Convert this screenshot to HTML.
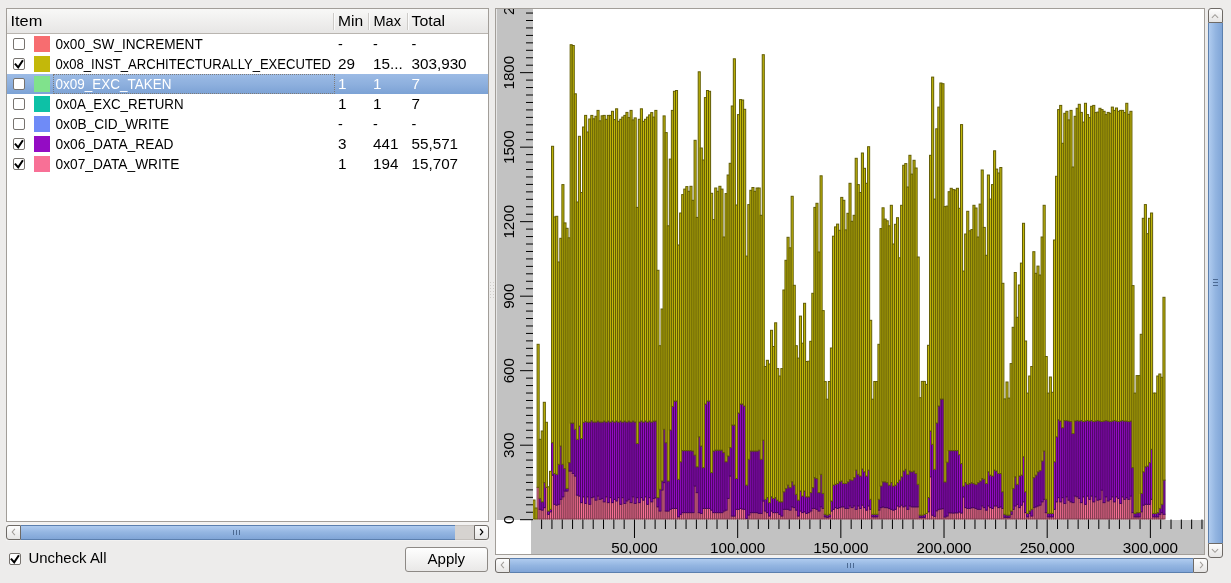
<!DOCTYPE html>
<html><head><meta charset="utf-8"><style>
html,body{margin:0;padding:0;}
body{width:1231px;height:583px;background:#edeceb;position:relative;overflow:hidden;font-family:"Liberation Sans",sans-serif;font-size:13.5px;color:#000;}
div,span,svg{position:absolute;box-sizing:border-box;}
.tree{left:6px;top:8px;width:483px;height:514px;border:1px solid #a29e99;background:#fff;}
.hdr{left:7px;top:9px;width:481px;height:25px;background:linear-gradient(#f8f8f7,#e7e6e5);border-bottom:1px solid #b9b5b0;}
.sep{top:13px;width:2px;height:17px;border-left:1px solid #cdcbc8;border-right:1px solid #fbfbfb;}
.ht{top:9px;height:24px;line-height:24px;white-space:nowrap;}
.sel{left:7px;width:481px;height:20px;background:linear-gradient(#9cbbe5,#8eb0de 50%,#7ca2d5);}
.focus{left:53px;width:282px;height:20px;border:1px dotted #7d7a78;}
.cb{left:13px;width:12px;height:12px;border:1px solid #77736f;border-radius:2px;background:#fff;}
.sw{left:34px;width:16px;height:16px;}
.t{height:20px;line-height:20px;white-space:nowrap;padding-top:1px;}
.t.w{color:#fff;}
.chart{left:0;top:0;will-change:transform;}
.sb{border:1px solid #6e6a66;background:linear-gradient(#fdfdfd,#e6e5e4);}
.hh{background:linear-gradient(#afcbef,#93b5e1 50%,#80a5d7);border-top:1px solid #5b7fae;border-bottom:1px solid #5b7fae;}
.vh{background:linear-gradient(90deg,#afcbef,#93b5e1 50%,#80a5d7);border-left:1px solid #5b7fae;border-right:1px solid #5b7fae;}
.grip{background:#4c6a93;}
.btn{left:405px;top:547px;width:83px;height:25px;border:1px solid #8d8985;border-radius:3px;background:linear-gradient(#fefefe,#e9e8e7);}
.arr{width:8px;height:8px;}
</style></head><body>
<div class="tree"></div>
<div class="hdr"></div>
<div class="sep" style="left:333px"></div><div class="sep" style="left:368px"></div><div class="sep" style="left:407px"></div>

<div class="cb" style="top:38px"></div><div class="sw" style="top:36px;background:#f76d70"></div><div class="cb" style="top:58px"></div><svg class="ck" style="left:13px;top:58px" width="12" height="12" viewBox="0 0 12 12"><path d="M1.9 5.6 L5.2 9.4 L9.9 2.2" fill="none" stroke="#000" stroke-width="2" stroke-linejoin="miter"/></svg><div class="sw" style="top:56px;background:#c3b80a"></div><div class="sel" style="top:74px"></div><div class="focus" style="top:74px"></div><div class="cb" style="top:78px"></div><div class="sw" style="top:76px;background:#80e28c"></div><div class="cb" style="top:98px"></div><div class="sw" style="top:96px;background:#0dc1a6"></div><div class="cb" style="top:118px"></div><div class="sw" style="top:116px;background:#6f8bf7"></div><div class="cb" style="top:138px"></div><svg class="ck" style="left:13px;top:138px" width="12" height="12" viewBox="0 0 12 12"><path d="M1.9 5.6 L5.2 9.4 L9.9 2.2" fill="none" stroke="#000" stroke-width="2" stroke-linejoin="miter"/></svg><div class="sw" style="top:136px;background:#940cc4"></div><div class="cb" style="top:158px"></div><svg class="ck" style="left:13px;top:158px" width="12" height="12" viewBox="0 0 12 12"><path d="M1.9 5.6 L5.2 9.4 L9.9 2.2" fill="none" stroke="#000" stroke-width="2" stroke-linejoin="miter"/></svg><div class="sw" style="top:156px;background:#f87096"></div>
<!-- left h scrollbar -->
<div style="left:6px;top:522px;width:483px;height:19px;background:#f3f2f1"></div>
<div class="sb" style="left:6px;top:525px;width:15px;height:15px;border-radius:3px 0 0 3px;"></div>
<svg class="arr" style="left:10px;top:528px" width="8" height="9" viewBox="0 0 8 9"><path d="M5 1 L2 4.5 L5 8" fill="none" stroke="#a19d99" stroke-width="1.2"/></svg>
<div class="hh" style="left:21px;top:525px;width:434px;height:15px;"></div>
<div class="grip" style="left:233px;top:530px;width:1px;height:5px"></div><div class="grip" style="left:236px;top:530px;width:1px;height:5px"></div><div class="grip" style="left:239px;top:530px;width:1px;height:5px"></div>
<div style="left:455px;top:525px;width:19px;height:15px;background:#d6d3d0;border-top:1px solid #c4c0bc;border-bottom:1px solid #c4c0bc"></div>
<div class="sb" style="left:474px;top:525px;width:15px;height:15px;border-radius:0 3px 3px 0;"></div>
<svg class="arr" style="left:477px;top:528px" width="8" height="9" viewBox="0 0 8 9"><path d="M3 1 L6 4.5 L3 8" fill="none" stroke="#000" stroke-width="1.4"/></svg>
<!-- uncheck all -->
<div class="cb" style="left:9px;top:553px"></div>
<svg class="ck" style="left:9px;top:553px" width="12" height="12" viewBox="0 0 12 12"><path d="M1.9 5.6 L5.2 9.4 L9.9 2.2" fill="none" stroke="#000" stroke-width="2" stroke-linejoin="miter"/></svg>

<div class="btn"></div>

<!-- splitter dots -->
<svg style="left:489px;top:281px" width="6" height="18" viewBox="0 0 6 18"><g fill="#cfcdca">
<rect x="1" y="1" width="1" height="1"/><rect x="4" y="1" width="1" height="1"/><rect x="1" y="4" width="1" height="1"/><rect x="4" y="4" width="1" height="1"/>
<rect x="1" y="7" width="1" height="1"/><rect x="4" y="7" width="1" height="1"/><rect x="1" y="10" width="1" height="1"/><rect x="4" y="10" width="1" height="1"/>
<rect x="1" y="13" width="1" height="1"/><rect x="4" y="13" width="1" height="1"/><rect x="1" y="16" width="1" height="1"/><rect x="4" y="16" width="1" height="1"/></g></svg>
<svg class="chart" width="1231" height="583" viewBox="0 0 1231 583">
<defs><clipPath id="pc"><rect x="533" y="9" width="671" height="511"/></clipPath>
<clipPath id="fc"><rect x="496" y="9" width="708" height="545"/></clipPath></defs>
<rect x="495.5" y="8.5" width="709" height="546" fill="#fff" stroke="#a29e99"/>
<g clip-path="url(#pc)">
<g fill="#f87096" stroke="#7c384b" stroke-width="1"><rect x="537.10" y="487.3" width="2.066" height="31.7"/><rect x="539.16" y="509.3" width="2.066" height="9.7"/><rect x="541.23" y="510.1" width="2.066" height="8.9"/><rect x="543.29" y="507.6" width="2.066" height="11.4"/><rect x="545.36" y="487.3" width="2.066" height="31.7"/><rect x="547.42" y="514.3" width="2.066" height="4.7"/><rect x="549.49" y="511.8" width="2.066" height="7.2"/><rect x="551.55" y="475.1" width="2.066" height="43.9"/><rect x="553.62" y="504.3" width="2.066" height="14.7"/><rect x="555.69" y="505.1" width="2.066" height="13.9"/><rect x="557.75" y="504.3" width="2.066" height="14.7"/><rect x="559.82" y="499.3" width="2.066" height="19.7"/><rect x="561.88" y="496.8" width="2.066" height="22.2"/><rect x="563.95" y="491.0" width="2.066" height="28.0"/><rect x="566.01" y="491.0" width="2.066" height="28.0"/><rect x="568.08" y="471.0" width="2.066" height="48.0"/><rect x="570.14" y="471.0" width="2.066" height="48.0"/><rect x="572.21" y="473.5" width="2.066" height="45.5"/><rect x="574.28" y="476.0" width="2.066" height="43.0"/><rect x="576.34" y="495.1" width="2.066" height="23.9"/><rect x="578.41" y="496.0" width="2.066" height="23.0"/><rect x="580.47" y="502.6" width="2.066" height="16.4"/><rect x="582.54" y="496.8" width="2.066" height="22.2"/><rect x="584.60" y="503.4" width="2.066" height="15.6"/><rect x="586.67" y="496.8" width="2.066" height="22.2"/><rect x="588.73" y="504.3" width="2.066" height="14.7"/><rect x="590.80" y="497.6" width="2.066" height="21.4"/><rect x="592.87" y="496.8" width="2.066" height="22.2"/><rect x="594.93" y="500.1" width="2.066" height="18.9"/><rect x="597.00" y="496.0" width="2.066" height="23.0"/><rect x="599.06" y="499.3" width="2.066" height="19.7"/><rect x="601.13" y="498.4" width="2.066" height="20.6"/><rect x="603.19" y="501.8" width="2.066" height="17.2"/><rect x="605.26" y="496.8" width="2.066" height="22.2"/><rect x="607.32" y="502.6" width="2.066" height="16.4"/><rect x="609.39" y="497.6" width="2.066" height="21.4"/><rect x="611.45" y="502.6" width="2.066" height="16.4"/><rect x="613.52" y="499.3" width="2.066" height="19.7"/><rect x="615.59" y="500.9" width="2.066" height="18.1"/><rect x="617.65" y="497.6" width="2.066" height="21.4"/><rect x="619.72" y="504.3" width="2.066" height="14.7"/><rect x="621.78" y="497.6" width="2.066" height="21.4"/><rect x="623.85" y="503.4" width="2.066" height="15.6"/><rect x="625.91" y="500.9" width="2.066" height="18.1"/><rect x="627.98" y="499.3" width="2.066" height="19.7"/><rect x="630.04" y="502.6" width="2.066" height="16.4"/><rect x="632.11" y="496.8" width="2.066" height="22.2"/><rect x="634.17" y="503.4" width="2.066" height="15.6"/><rect x="636.24" y="497.6" width="2.066" height="21.4"/><rect x="638.31" y="502.6" width="2.066" height="16.4"/><rect x="640.37" y="497.6" width="2.066" height="21.4"/><rect x="642.44" y="500.1" width="2.066" height="18.9"/><rect x="644.50" y="496.8" width="2.066" height="22.2"/><rect x="646.57" y="504.3" width="2.066" height="14.7"/><rect x="648.63" y="497.6" width="2.066" height="21.4"/><rect x="650.70" y="501.8" width="2.066" height="17.2"/><rect x="652.76" y="498.4" width="2.066" height="20.6"/><rect x="654.83" y="497.6" width="2.066" height="21.4"/><rect x="656.90" y="506.8" width="2.066" height="12.2"/><rect x="658.96" y="511.0" width="2.066" height="8.0"/><rect x="661.03" y="490.0" width="2.066" height="29.0"/><rect x="663.09" y="482.6" width="2.066" height="36.4"/><rect x="665.16" y="511.0" width="2.066" height="8.0"/><rect x="667.22" y="511.0" width="2.066" height="8.0"/><rect x="669.29" y="509.3" width="2.066" height="9.7"/><rect x="671.35" y="508.4" width="2.066" height="10.6"/><rect x="673.42" y="508.4" width="2.066" height="10.6"/><rect x="675.49" y="508.4" width="2.066" height="10.6"/><rect x="677.55" y="516.8" width="2.066" height="2.2"/><rect x="679.62" y="514.3" width="2.066" height="4.7"/><rect x="681.68" y="512.6" width="2.066" height="6.4"/><rect x="683.75" y="512.6" width="2.066" height="6.4"/><rect x="685.81" y="512.6" width="2.066" height="6.4"/><rect x="687.88" y="512.6" width="2.066" height="6.4"/><rect x="689.94" y="512.6" width="2.066" height="6.4"/><rect x="692.01" y="512.6" width="2.066" height="6.4"/><rect x="694.07" y="486.0" width="2.066" height="33.0"/><rect x="696.14" y="492.6" width="2.066" height="26.4"/><rect x="698.21" y="512.6" width="2.066" height="6.4"/><rect x="700.27" y="513.4" width="2.066" height="5.6"/><rect x="702.34" y="508.4" width="2.066" height="10.6"/><rect x="704.40" y="508.4" width="2.066" height="10.6"/><rect x="706.47" y="508.4" width="2.066" height="10.6"/><rect x="708.53" y="508.4" width="2.066" height="10.6"/><rect x="710.60" y="510.1" width="2.066" height="8.9"/><rect x="712.66" y="512.6" width="2.066" height="6.4"/><rect x="714.73" y="512.6" width="2.066" height="6.4"/><rect x="716.79" y="512.6" width="2.066" height="6.4"/><rect x="718.86" y="512.6" width="2.066" height="6.4"/><rect x="720.93" y="512.6" width="2.066" height="6.4"/><rect x="722.99" y="511.0" width="2.066" height="8.0"/><rect x="725.06" y="510.1" width="2.066" height="8.9"/><rect x="727.12" y="498.4" width="2.066" height="20.6"/><rect x="729.19" y="476.0" width="2.066" height="43.0"/><rect x="731.25" y="516.0" width="2.066" height="3.0"/><rect x="733.32" y="516.0" width="2.066" height="3.0"/><rect x="735.38" y="509.3" width="2.066" height="9.7"/><rect x="737.45" y="509.3" width="2.066" height="9.7"/><rect x="739.52" y="508.4" width="2.066" height="10.6"/><rect x="741.58" y="509.0" width="2.066" height="10.0"/><rect x="743.65" y="509.3" width="2.066" height="9.7"/><rect x="745.71" y="518.4" width="2.066" height="0.6"/><rect x="747.78" y="515.0" width="2.066" height="4.0"/><rect x="749.84" y="512.6" width="2.066" height="6.4"/><rect x="751.91" y="512.6" width="2.066" height="6.4"/><rect x="753.97" y="512.6" width="2.066" height="6.4"/><rect x="756.04" y="512.6" width="2.066" height="6.4"/><rect x="758.11" y="513.4" width="2.066" height="5.6"/><rect x="760.17" y="513.4" width="2.066" height="5.6"/><rect x="762.24" y="501.0" width="2.066" height="18.0"/><rect x="764.30" y="511.0" width="2.066" height="8.0"/><rect x="766.37" y="512.6" width="2.066" height="6.4"/><rect x="768.43" y="516.0" width="2.066" height="3.0"/><rect x="770.50" y="511.0" width="2.066" height="8.0"/><rect x="772.56" y="512.6" width="2.066" height="6.4"/><rect x="774.63" y="512.6" width="2.066" height="6.4"/><rect x="776.69" y="512.6" width="2.066" height="6.4"/><rect x="778.76" y="514.3" width="2.066" height="4.7"/><rect x="780.83" y="516.0" width="2.066" height="3.0"/><rect x="782.89" y="509.3" width="2.066" height="9.7"/><rect x="784.96" y="509.3" width="2.066" height="9.7"/><rect x="787.02" y="509.3" width="2.066" height="9.7"/><rect x="789.09" y="510.1" width="2.066" height="8.9"/><rect x="791.15" y="506.8" width="2.066" height="12.2"/><rect x="793.22" y="507.6" width="2.066" height="11.4"/><rect x="795.28" y="510.1" width="2.066" height="8.9"/><rect x="797.35" y="516.0" width="2.066" height="3.0"/><rect x="799.41" y="511.0" width="2.066" height="8.0"/><rect x="801.48" y="512.6" width="2.066" height="6.4"/><rect x="803.55" y="511.8" width="2.066" height="7.2"/><rect x="805.61" y="513.4" width="2.066" height="5.6"/><rect x="807.68" y="512.6" width="2.066" height="6.4"/><rect x="809.74" y="511.0" width="2.066" height="8.0"/><rect x="811.81" y="508.4" width="2.066" height="10.6"/><rect x="813.87" y="508.4" width="2.066" height="10.6"/><rect x="815.94" y="509.3" width="2.066" height="9.7"/><rect x="818.00" y="511.0" width="2.066" height="8.0"/><rect x="820.07" y="506.8" width="2.066" height="12.2"/><rect x="822.14" y="508.4" width="2.066" height="10.6"/><rect x="824.20" y="516.8" width="2.066" height="2.2"/><rect x="826.27" y="517.3" width="2.066" height="1.7"/><rect x="828.33" y="516.8" width="2.066" height="2.2"/><rect x="830.40" y="511.0" width="2.066" height="8.0"/><rect x="832.46" y="509.3" width="2.066" height="9.7"/><rect x="834.53" y="507.6" width="2.066" height="11.4"/><rect x="836.59" y="508.4" width="2.066" height="10.6"/><rect x="838.66" y="507.6" width="2.066" height="11.4"/><rect x="840.73" y="506.8" width="2.066" height="12.2"/><rect x="842.79" y="506.8" width="2.066" height="12.2"/><rect x="844.86" y="508.4" width="2.066" height="10.6"/><rect x="846.92" y="508.4" width="2.066" height="10.6"/><rect x="848.99" y="505.9" width="2.066" height="13.1"/><rect x="851.05" y="507.6" width="2.066" height="11.4"/><rect x="853.12" y="505.9" width="2.066" height="13.1"/><rect x="855.18" y="509.3" width="2.066" height="9.7"/><rect x="857.25" y="505.9" width="2.066" height="13.1"/><rect x="859.31" y="508.4" width="2.066" height="10.6"/><rect x="861.38" y="505.1" width="2.066" height="13.9"/><rect x="863.45" y="507.6" width="2.066" height="11.4"/><rect x="865.51" y="510.1" width="2.066" height="8.9"/><rect x="867.58" y="505.9" width="2.066" height="13.1"/><rect x="869.64" y="509.3" width="2.066" height="9.7"/><rect x="871.71" y="516.8" width="2.066" height="2.2"/><rect x="873.77" y="516.8" width="2.066" height="2.2"/><rect x="875.84" y="516.8" width="2.066" height="2.2"/><rect x="877.90" y="510.1" width="2.066" height="8.9"/><rect x="879.97" y="507.6" width="2.066" height="11.4"/><rect x="882.03" y="506.8" width="2.066" height="12.2"/><rect x="884.10" y="507.6" width="2.066" height="11.4"/><rect x="886.17" y="507.6" width="2.066" height="11.4"/><rect x="888.23" y="508.4" width="2.066" height="10.6"/><rect x="890.30" y="509.3" width="2.066" height="9.7"/><rect x="892.36" y="510.1" width="2.066" height="8.9"/><rect x="894.43" y="509.3" width="2.066" height="9.7"/><rect x="896.49" y="505.9" width="2.066" height="13.1"/><rect x="898.56" y="506.8" width="2.066" height="12.2"/><rect x="900.62" y="505.1" width="2.066" height="13.9"/><rect x="902.69" y="506.8" width="2.066" height="12.2"/><rect x="904.76" y="505.9" width="2.066" height="13.1"/><rect x="906.82" y="509.3" width="2.066" height="9.7"/><rect x="908.89" y="505.9" width="2.066" height="13.1"/><rect x="910.95" y="506.8" width="2.066" height="12.2"/><rect x="913.02" y="506.8" width="2.066" height="12.2"/><rect x="915.08" y="506.8" width="2.066" height="12.2"/><rect x="917.15" y="506.8" width="2.066" height="12.2"/><rect x="919.21" y="517.3" width="2.066" height="1.7"/><rect x="921.28" y="517.3" width="2.066" height="1.7"/><rect x="923.35" y="517.3" width="2.066" height="1.7"/><rect x="925.41" y="513.4" width="2.066" height="5.6"/><rect x="927.48" y="511.8" width="2.066" height="7.2"/><rect x="929.54" y="476.8" width="2.066" height="42.2"/><rect x="931.61" y="515.2" width="2.066" height="3.8"/><rect x="933.67" y="516.3" width="2.066" height="2.7"/><rect x="935.74" y="510.8" width="2.066" height="8.2"/><rect x="937.80" y="509.3" width="2.066" height="9.7"/><rect x="939.87" y="509.0" width="2.066" height="10.0"/><rect x="941.93" y="508.6" width="2.066" height="10.4"/><rect x="944.00" y="517.0" width="2.066" height="2.0"/><rect x="946.07" y="516.0" width="2.066" height="3.0"/><rect x="948.13" y="512.8" width="2.066" height="6.2"/><rect x="950.20" y="512.8" width="2.066" height="6.2"/><rect x="952.26" y="513.0" width="2.066" height="6.0"/><rect x="954.33" y="512.8" width="2.066" height="6.2"/><rect x="956.39" y="512.8" width="2.066" height="6.2"/><rect x="958.46" y="512.0" width="2.066" height="7.0"/><rect x="960.52" y="513.0" width="2.066" height="6.0"/><rect x="962.59" y="496.9" width="2.066" height="22.1"/><rect x="964.65" y="507.6" width="2.066" height="11.4"/><rect x="966.72" y="508.4" width="2.066" height="10.6"/><rect x="968.79" y="508.4" width="2.066" height="10.6"/><rect x="970.85" y="507.6" width="2.066" height="11.4"/><rect x="972.92" y="507.6" width="2.066" height="11.4"/><rect x="974.98" y="508.4" width="2.066" height="10.6"/><rect x="977.05" y="509.3" width="2.066" height="9.7"/><rect x="979.11" y="509.3" width="2.066" height="9.7"/><rect x="981.18" y="505.9" width="2.066" height="13.1"/><rect x="983.24" y="507.6" width="2.066" height="11.4"/><rect x="985.31" y="510.1" width="2.066" height="8.9"/><rect x="987.38" y="505.9" width="2.066" height="13.1"/><rect x="989.44" y="507.6" width="2.066" height="11.4"/><rect x="991.51" y="508.4" width="2.066" height="10.6"/><rect x="993.57" y="505.9" width="2.066" height="13.1"/><rect x="995.64" y="505.9" width="2.066" height="13.1"/><rect x="997.70" y="507.6" width="2.066" height="11.4"/><rect x="999.77" y="506.8" width="2.066" height="12.2"/><rect x="1001.83" y="508.4" width="2.066" height="10.6"/><rect x="1003.90" y="517.3" width="2.066" height="1.7"/><rect x="1005.97" y="517.3" width="2.066" height="1.7"/><rect x="1008.03" y="517.3" width="2.066" height="1.7"/><rect x="1010.10" y="514.3" width="2.066" height="4.7"/><rect x="1012.16" y="509.3" width="2.066" height="9.7"/><rect x="1014.23" y="505.9" width="2.066" height="13.1"/><rect x="1016.29" y="504.3" width="2.066" height="14.7"/><rect x="1018.36" y="507.6" width="2.066" height="11.4"/><rect x="1020.42" y="505.1" width="2.066" height="13.9"/><rect x="1022.49" y="501.8" width="2.066" height="17.2"/><rect x="1024.55" y="512.6" width="2.066" height="6.4"/><rect x="1026.62" y="516.8" width="2.066" height="2.2"/><rect x="1028.69" y="513.4" width="2.066" height="5.6"/><rect x="1030.75" y="516.0" width="2.066" height="3.0"/><rect x="1032.82" y="507.6" width="2.066" height="11.4"/><rect x="1034.88" y="506.8" width="2.066" height="12.2"/><rect x="1036.95" y="505.9" width="2.066" height="13.1"/><rect x="1039.01" y="505.1" width="2.066" height="13.9"/><rect x="1041.08" y="501.8" width="2.066" height="17.2"/><rect x="1043.14" y="499.3" width="2.066" height="19.7"/><rect x="1045.21" y="512.6" width="2.066" height="6.4"/><rect x="1047.28" y="516.8" width="2.066" height="2.2"/><rect x="1049.34" y="516.8" width="2.066" height="2.2"/><rect x="1051.41" y="516.8" width="2.066" height="2.2"/><rect x="1053.47" y="509.3" width="2.066" height="9.7"/><rect x="1055.54" y="501.8" width="2.066" height="17.2"/><rect x="1057.60" y="497.6" width="2.066" height="21.4"/><rect x="1059.67" y="501.8" width="2.066" height="17.2"/><rect x="1061.73" y="497.6" width="2.066" height="21.4"/><rect x="1063.80" y="503.4" width="2.066" height="15.6"/><rect x="1065.86" y="496.8" width="2.066" height="22.2"/><rect x="1067.93" y="500.1" width="2.066" height="18.9"/><rect x="1070.00" y="501.8" width="2.066" height="17.2"/><rect x="1072.06" y="502.6" width="2.066" height="16.4"/><rect x="1074.13" y="496.0" width="2.066" height="23.0"/><rect x="1076.19" y="496.8" width="2.066" height="22.2"/><rect x="1078.26" y="498.4" width="2.066" height="20.6"/><rect x="1080.32" y="502.6" width="2.066" height="16.4"/><rect x="1082.39" y="496.8" width="2.066" height="22.2"/><rect x="1084.45" y="504.3" width="2.066" height="14.7"/><rect x="1086.52" y="496.0" width="2.066" height="23.0"/><rect x="1088.59" y="499.3" width="2.066" height="19.7"/><rect x="1090.65" y="496.0" width="2.066" height="23.0"/><rect x="1092.72" y="501.8" width="2.066" height="17.2"/><rect x="1094.78" y="496.8" width="2.066" height="22.2"/><rect x="1096.85" y="500.1" width="2.066" height="18.9"/><rect x="1098.91" y="499.3" width="2.066" height="19.7"/><rect x="1100.98" y="490.1" width="2.066" height="28.9"/><rect x="1103.04" y="502.6" width="2.066" height="16.4"/><rect x="1105.11" y="496.8" width="2.066" height="22.2"/><rect x="1107.17" y="500.9" width="2.066" height="18.1"/><rect x="1109.24" y="499.3" width="2.066" height="19.7"/><rect x="1111.31" y="496.8" width="2.066" height="22.2"/><rect x="1113.37" y="501.8" width="2.066" height="17.2"/><rect x="1115.44" y="496.8" width="2.066" height="22.2"/><rect x="1117.50" y="498.4" width="2.066" height="20.6"/><rect x="1119.57" y="503.4" width="2.066" height="15.6"/><rect x="1121.63" y="496.8" width="2.066" height="22.2"/><rect x="1123.70" y="499.3" width="2.066" height="19.7"/><rect x="1125.76" y="497.6" width="2.066" height="21.4"/><rect x="1127.83" y="499.3" width="2.066" height="19.7"/><rect x="1129.89" y="496.0" width="2.066" height="23.0"/><rect x="1131.96" y="512.6" width="2.066" height="6.4"/><rect x="1134.03" y="516.8" width="2.066" height="2.2"/><rect x="1136.09" y="516.8" width="2.066" height="2.2"/><rect x="1138.16" y="516.8" width="2.066" height="2.2"/><rect x="1140.22" y="511.8" width="2.066" height="7.2"/><rect x="1142.29" y="505.1" width="2.066" height="13.9"/><rect x="1144.35" y="504.3" width="2.066" height="14.7"/><rect x="1146.42" y="504.3" width="2.066" height="14.7"/><rect x="1148.48" y="504.3" width="2.066" height="14.7"/><rect x="1150.55" y="499.3" width="2.066" height="19.7"/><rect x="1152.62" y="516.8" width="2.066" height="2.2"/><rect x="1154.68" y="516.8" width="2.066" height="2.2"/><rect x="1156.75" y="516.8" width="2.066" height="2.2"/><rect x="1158.81" y="514.3" width="2.066" height="4.7"/><rect x="1160.88" y="512.6" width="2.066" height="6.4"/><rect x="1162.94" y="514.3" width="2.066" height="4.7"/></g>
<g fill="#940cc4" stroke="#4a0662" stroke-width="1"><rect x="539.16" y="498.4" width="2.066" height="10.9"/><rect x="541.23" y="501.8" width="2.066" height="8.3"/><rect x="543.29" y="482.6" width="2.066" height="25.0"/><rect x="547.42" y="511.0" width="2.066" height="3.3"/><rect x="549.49" y="509.3" width="2.066" height="2.5"/><rect x="551.55" y="442.7" width="2.066" height="32.4"/><rect x="553.62" y="473.5" width="2.066" height="30.8"/><rect x="555.69" y="474.3" width="2.066" height="30.8"/><rect x="557.75" y="464.3" width="2.066" height="40.0"/><rect x="559.82" y="446.0" width="2.066" height="53.3"/><rect x="561.88" y="464.3" width="2.066" height="32.5"/><rect x="563.95" y="468.5" width="2.066" height="22.5"/><rect x="566.01" y="488.4" width="2.066" height="2.6"/><rect x="568.08" y="462.6" width="2.066" height="8.4"/><rect x="570.14" y="423.0" width="2.066" height="48.0"/><rect x="572.21" y="423.0" width="2.066" height="50.5"/><rect x="574.28" y="429.3" width="2.066" height="46.7"/><rect x="576.34" y="439.3" width="2.066" height="55.8"/><rect x="578.41" y="426.0" width="2.066" height="70.0"/><rect x="580.47" y="438.5" width="2.066" height="64.1"/><rect x="582.54" y="422.3" width="2.066" height="74.5"/><rect x="584.60" y="421.4" width="2.066" height="82.0"/><rect x="586.67" y="422.0" width="2.066" height="74.8"/><rect x="588.73" y="422.0" width="2.066" height="82.3"/><rect x="590.80" y="420.6" width="2.066" height="77.0"/><rect x="592.87" y="422.0" width="2.066" height="74.8"/><rect x="594.93" y="422.0" width="2.066" height="78.1"/><rect x="597.00" y="421.0" width="2.066" height="75.0"/><rect x="599.06" y="422.0" width="2.066" height="77.3"/><rect x="601.13" y="422.0" width="2.066" height="76.4"/><rect x="603.19" y="421.0" width="2.066" height="80.8"/><rect x="605.26" y="422.0" width="2.066" height="74.8"/><rect x="607.32" y="421.0" width="2.066" height="81.6"/><rect x="609.39" y="422.0" width="2.066" height="75.6"/><rect x="611.45" y="421.0" width="2.066" height="81.6"/><rect x="613.52" y="422.0" width="2.066" height="77.3"/><rect x="615.59" y="421.0" width="2.066" height="79.9"/><rect x="617.65" y="422.0" width="2.066" height="75.6"/><rect x="619.72" y="421.0" width="2.066" height="83.3"/><rect x="621.78" y="422.0" width="2.066" height="75.6"/><rect x="623.85" y="421.0" width="2.066" height="82.4"/><rect x="625.91" y="422.0" width="2.066" height="78.9"/><rect x="627.98" y="421.0" width="2.066" height="78.3"/><rect x="630.04" y="422.0" width="2.066" height="80.6"/><rect x="632.11" y="421.0" width="2.066" height="75.8"/><rect x="634.17" y="422.0" width="2.066" height="81.4"/><rect x="636.24" y="443.5" width="2.066" height="54.1"/><rect x="638.31" y="422.0" width="2.066" height="80.6"/><rect x="640.37" y="421.0" width="2.066" height="76.6"/><rect x="642.44" y="422.0" width="2.066" height="78.1"/><rect x="644.50" y="421.0" width="2.066" height="75.8"/><rect x="646.57" y="422.0" width="2.066" height="82.3"/><rect x="648.63" y="421.0" width="2.066" height="76.6"/><rect x="650.70" y="422.0" width="2.066" height="79.8"/><rect x="652.76" y="421.0" width="2.066" height="77.4"/><rect x="654.83" y="421.0" width="2.066" height="76.6"/><rect x="656.90" y="497.6" width="2.066" height="9.2"/><rect x="658.96" y="489.3" width="2.066" height="21.7"/><rect x="661.03" y="481.0" width="2.066" height="9.0"/><rect x="663.09" y="429.3" width="2.066" height="53.3"/><rect x="665.16" y="442.7" width="2.066" height="68.3"/><rect x="667.22" y="481.0" width="2.066" height="30.0"/><rect x="669.29" y="430.0" width="2.066" height="79.3"/><rect x="671.35" y="406.4" width="2.066" height="102.0"/><rect x="673.42" y="401.0" width="2.066" height="107.4"/><rect x="675.49" y="401.0" width="2.066" height="107.4"/><rect x="677.55" y="479.3" width="2.066" height="37.5"/><rect x="679.62" y="461.8" width="2.066" height="52.5"/><rect x="681.68" y="450.6" width="2.066" height="62.0"/><rect x="683.75" y="450.6" width="2.066" height="62.0"/><rect x="685.81" y="450.6" width="2.066" height="62.0"/><rect x="687.88" y="450.6" width="2.066" height="62.0"/><rect x="689.94" y="450.6" width="2.066" height="62.0"/><rect x="692.01" y="451.0" width="2.066" height="61.6"/><rect x="694.07" y="455.1" width="2.066" height="30.9"/><rect x="696.14" y="466.8" width="2.066" height="25.8"/><rect x="698.21" y="436.8" width="2.066" height="75.8"/><rect x="700.27" y="446.0" width="2.066" height="67.4"/><rect x="702.34" y="467.6" width="2.066" height="40.8"/><rect x="704.40" y="404.0" width="2.066" height="104.4"/><rect x="706.47" y="401.0" width="2.066" height="107.4"/><rect x="708.53" y="401.0" width="2.066" height="107.4"/><rect x="710.60" y="472.6" width="2.066" height="37.5"/><rect x="712.66" y="451.0" width="2.066" height="61.6"/><rect x="714.73" y="450.1" width="2.066" height="62.5"/><rect x="716.79" y="450.1" width="2.066" height="62.5"/><rect x="718.86" y="450.1" width="2.066" height="62.5"/><rect x="720.93" y="450.1" width="2.066" height="62.5"/><rect x="722.99" y="452.6" width="2.066" height="58.4"/><rect x="725.06" y="461.8" width="2.066" height="48.3"/><rect x="727.12" y="456.0" width="2.066" height="42.4"/><rect x="729.19" y="447.6" width="2.066" height="28.4"/><rect x="731.25" y="425.0" width="2.066" height="91.0"/><rect x="733.32" y="425.0" width="2.066" height="91.0"/><rect x="735.38" y="478.5" width="2.066" height="30.8"/><rect x="737.45" y="413.0" width="2.066" height="96.3"/><rect x="739.52" y="404.0" width="2.066" height="104.4"/><rect x="741.58" y="404.0" width="2.066" height="105.0"/><rect x="743.65" y="406.0" width="2.066" height="103.3"/><rect x="745.71" y="485.1" width="2.066" height="33.3"/><rect x="747.78" y="459.3" width="2.066" height="55.7"/><rect x="749.84" y="451.0" width="2.066" height="61.6"/><rect x="751.91" y="451.0" width="2.066" height="61.6"/><rect x="753.97" y="451.0" width="2.066" height="61.6"/><rect x="756.04" y="451.0" width="2.066" height="61.6"/><rect x="758.11" y="450.1" width="2.066" height="63.3"/><rect x="760.17" y="459.3" width="2.066" height="54.1"/><rect x="762.24" y="440.2" width="2.066" height="60.8"/><rect x="764.30" y="499.3" width="2.066" height="11.7"/><rect x="766.37" y="497.6" width="2.066" height="15.0"/><rect x="768.43" y="502.6" width="2.066" height="13.4"/><rect x="770.50" y="496.8" width="2.066" height="14.2"/><rect x="772.56" y="498.4" width="2.066" height="14.2"/><rect x="774.63" y="497.6" width="2.066" height="15.0"/><rect x="776.69" y="500.1" width="2.066" height="12.5"/><rect x="778.76" y="501.8" width="2.066" height="12.5"/><rect x="780.83" y="501.8" width="2.066" height="14.2"/><rect x="782.89" y="491.8" width="2.066" height="17.5"/><rect x="784.96" y="488.4" width="2.066" height="20.9"/><rect x="787.02" y="485.1" width="2.066" height="24.2"/><rect x="789.09" y="487.6" width="2.066" height="22.5"/><rect x="791.15" y="481.8" width="2.066" height="25.0"/><rect x="793.22" y="485.1" width="2.066" height="22.5"/><rect x="795.28" y="494.3" width="2.066" height="15.8"/><rect x="797.35" y="500.1" width="2.066" height="15.9"/><rect x="799.41" y="491.0" width="2.066" height="20.0"/><rect x="801.48" y="496.0" width="2.066" height="16.6"/><rect x="803.55" y="491.0" width="2.066" height="20.8"/><rect x="805.61" y="496.8" width="2.066" height="16.6"/><rect x="807.68" y="496.8" width="2.066" height="15.8"/><rect x="809.74" y="492.6" width="2.066" height="18.4"/><rect x="811.81" y="487.6" width="2.066" height="20.8"/><rect x="813.87" y="477.6" width="2.066" height="30.8"/><rect x="815.94" y="478.5" width="2.066" height="30.8"/><rect x="818.00" y="492.6" width="2.066" height="18.4"/><rect x="820.07" y="474.3" width="2.066" height="32.5"/><rect x="822.14" y="493.4" width="2.066" height="15.0"/><rect x="824.20" y="514.3" width="2.066" height="2.5"/><rect x="826.27" y="515.1" width="2.066" height="2.2"/><rect x="828.33" y="514.3" width="2.066" height="2.5"/><rect x="830.40" y="501.0" width="2.066" height="10.0"/><rect x="832.46" y="485.1" width="2.066" height="24.2"/><rect x="834.53" y="484.3" width="2.066" height="23.3"/><rect x="836.59" y="483.5" width="2.066" height="24.9"/><rect x="838.66" y="481.8" width="2.066" height="25.8"/><rect x="840.73" y="481.0" width="2.066" height="25.8"/><rect x="842.79" y="483.5" width="2.066" height="23.3"/><rect x="844.86" y="483.5" width="2.066" height="24.9"/><rect x="846.92" y="481.8" width="2.066" height="26.6"/><rect x="848.99" y="479.6" width="2.066" height="26.3"/><rect x="851.05" y="480.1" width="2.066" height="27.5"/><rect x="853.12" y="477.6" width="2.066" height="28.3"/><rect x="855.18" y="470.1" width="2.066" height="39.2"/><rect x="857.25" y="474.3" width="2.066" height="31.6"/><rect x="859.31" y="476.0" width="2.066" height="32.4"/><rect x="861.38" y="469.0" width="2.066" height="36.1"/><rect x="863.45" y="471.8" width="2.066" height="35.8"/><rect x="865.51" y="476.0" width="2.066" height="34.1"/><rect x="867.58" y="470.1" width="2.066" height="35.8"/><rect x="869.64" y="499.3" width="2.066" height="10.0"/><rect x="871.71" y="514.3" width="2.066" height="2.5"/><rect x="873.77" y="514.3" width="2.066" height="2.5"/><rect x="875.84" y="514.3" width="2.066" height="2.5"/><rect x="877.90" y="499.3" width="2.066" height="10.8"/><rect x="879.97" y="486.0" width="2.066" height="21.6"/><rect x="882.03" y="481.8" width="2.066" height="25.0"/><rect x="884.10" y="481.8" width="2.066" height="25.8"/><rect x="886.17" y="482.6" width="2.066" height="25.0"/><rect x="888.23" y="485.1" width="2.066" height="23.3"/><rect x="890.30" y="482.6" width="2.066" height="26.7"/><rect x="892.36" y="486.0" width="2.066" height="24.1"/><rect x="894.43" y="485.1" width="2.066" height="24.2"/><rect x="896.49" y="482.6" width="2.066" height="23.3"/><rect x="898.56" y="480.1" width="2.066" height="26.7"/><rect x="900.62" y="476.8" width="2.066" height="28.3"/><rect x="902.69" y="471.0" width="2.066" height="35.8"/><rect x="904.76" y="469.3" width="2.066" height="36.6"/><rect x="906.82" y="474.3" width="2.066" height="35.0"/><rect x="908.89" y="471.0" width="2.066" height="34.9"/><rect x="910.95" y="471.8" width="2.066" height="35.0"/><rect x="913.02" y="471.0" width="2.066" height="35.8"/><rect x="915.08" y="473.5" width="2.066" height="33.3"/><rect x="917.15" y="484.3" width="2.066" height="22.5"/><rect x="919.21" y="515.1" width="2.066" height="2.2"/><rect x="921.28" y="515.1" width="2.066" height="2.2"/><rect x="923.35" y="514.3" width="2.066" height="3.0"/><rect x="927.48" y="497.6" width="2.066" height="14.2"/><rect x="929.54" y="431.0" width="2.066" height="45.8"/><rect x="931.61" y="444.3" width="2.066" height="70.9"/><rect x="933.67" y="469.3" width="2.066" height="47.0"/><rect x="935.74" y="423.0" width="2.066" height="87.8"/><rect x="937.80" y="406.0" width="2.066" height="103.3"/><rect x="939.87" y="399.0" width="2.066" height="110.0"/><rect x="941.93" y="399.0" width="2.066" height="109.6"/><rect x="944.00" y="482.0" width="2.066" height="35.0"/><rect x="946.07" y="462.2" width="2.066" height="53.8"/><rect x="948.13" y="450.6" width="2.066" height="62.2"/><rect x="950.20" y="450.6" width="2.066" height="62.2"/><rect x="952.26" y="450.6" width="2.066" height="62.4"/><rect x="954.33" y="450.6" width="2.066" height="62.2"/><rect x="956.39" y="450.6" width="2.066" height="62.2"/><rect x="958.46" y="454.7" width="2.066" height="57.3"/><rect x="960.52" y="463.6" width="2.066" height="49.4"/><rect x="962.59" y="486.1" width="2.066" height="10.8"/><rect x="964.65" y="482.6" width="2.066" height="25.0"/><rect x="966.72" y="484.3" width="2.066" height="24.1"/><rect x="968.79" y="483.5" width="2.066" height="24.9"/><rect x="970.85" y="482.6" width="2.066" height="25.0"/><rect x="972.92" y="483.5" width="2.066" height="24.1"/><rect x="974.98" y="484.3" width="2.066" height="24.1"/><rect x="977.05" y="482.6" width="2.066" height="26.7"/><rect x="979.11" y="481.0" width="2.066" height="28.3"/><rect x="981.18" y="478.5" width="2.066" height="27.4"/><rect x="983.24" y="479.3" width="2.066" height="28.3"/><rect x="985.31" y="483.5" width="2.066" height="26.6"/><rect x="987.38" y="471.8" width="2.066" height="34.1"/><rect x="989.44" y="475.1" width="2.066" height="32.5"/><rect x="991.51" y="476.0" width="2.066" height="32.4"/><rect x="993.57" y="470.1" width="2.066" height="35.8"/><rect x="995.64" y="471.0" width="2.066" height="34.9"/><rect x="997.70" y="473.5" width="2.066" height="34.1"/><rect x="999.77" y="473.5" width="2.066" height="33.3"/><rect x="1001.83" y="491.8" width="2.066" height="16.6"/><rect x="1003.90" y="514.3" width="2.066" height="3.0"/><rect x="1005.97" y="515.1" width="2.066" height="2.2"/><rect x="1008.03" y="515.1" width="2.066" height="2.2"/><rect x="1010.10" y="511.0" width="2.066" height="3.3"/><rect x="1012.16" y="488.4" width="2.066" height="20.9"/><rect x="1014.23" y="476.8" width="2.066" height="29.1"/><rect x="1016.29" y="484.3" width="2.066" height="20.0"/><rect x="1018.36" y="476.0" width="2.066" height="31.6"/><rect x="1020.42" y="475.1" width="2.066" height="30.0"/><rect x="1022.49" y="456.8" width="2.066" height="45.0"/><rect x="1024.55" y="491.8" width="2.066" height="20.8"/><rect x="1026.62" y="513.4" width="2.066" height="3.4"/><rect x="1028.69" y="511.0" width="2.066" height="2.4"/><rect x="1030.75" y="509.3" width="2.066" height="6.7"/><rect x="1032.82" y="477.6" width="2.066" height="30.0"/><rect x="1034.88" y="475.1" width="2.066" height="31.7"/><rect x="1036.95" y="471.8" width="2.066" height="34.1"/><rect x="1039.01" y="470.6" width="2.066" height="34.5"/><rect x="1041.08" y="461.0" width="2.066" height="40.8"/><rect x="1043.14" y="451.0" width="2.066" height="48.3"/><rect x="1045.21" y="499.3" width="2.066" height="13.3"/><rect x="1047.28" y="513.4" width="2.066" height="3.4"/><rect x="1049.34" y="513.4" width="2.066" height="3.4"/><rect x="1051.41" y="513.4" width="2.066" height="3.4"/><rect x="1053.47" y="461.8" width="2.066" height="47.5"/><rect x="1055.54" y="436.8" width="2.066" height="65.0"/><rect x="1057.60" y="419.8" width="2.066" height="77.8"/><rect x="1059.67" y="421.0" width="2.066" height="80.8"/><rect x="1061.73" y="427.7" width="2.066" height="69.9"/><rect x="1063.80" y="420.6" width="2.066" height="82.8"/><rect x="1065.86" y="420.6" width="2.066" height="76.2"/><rect x="1067.93" y="421.0" width="2.066" height="79.1"/><rect x="1070.00" y="421.5" width="2.066" height="80.3"/><rect x="1072.06" y="433.5" width="2.066" height="69.1"/><rect x="1074.13" y="421.0" width="2.066" height="75.0"/><rect x="1076.19" y="420.5" width="2.066" height="76.3"/><rect x="1078.26" y="421.0" width="2.066" height="77.4"/><rect x="1080.32" y="420.5" width="2.066" height="82.1"/><rect x="1082.39" y="421.5" width="2.066" height="75.3"/><rect x="1084.45" y="421.0" width="2.066" height="83.3"/><rect x="1086.52" y="420.5" width="2.066" height="75.5"/><rect x="1088.59" y="421.0" width="2.066" height="78.3"/><rect x="1090.65" y="420.5" width="2.066" height="75.5"/><rect x="1092.72" y="421.5" width="2.066" height="80.3"/><rect x="1094.78" y="421.0" width="2.066" height="75.8"/><rect x="1096.85" y="420.5" width="2.066" height="79.6"/><rect x="1098.91" y="421.0" width="2.066" height="78.3"/><rect x="1100.98" y="421.5" width="2.066" height="68.6"/><rect x="1103.04" y="421.0" width="2.066" height="81.6"/><rect x="1105.11" y="420.5" width="2.066" height="76.3"/><rect x="1107.17" y="421.0" width="2.066" height="79.9"/><rect x="1109.24" y="421.5" width="2.066" height="77.8"/><rect x="1111.31" y="421.0" width="2.066" height="75.8"/><rect x="1113.37" y="420.5" width="2.066" height="81.3"/><rect x="1115.44" y="421.0" width="2.066" height="75.8"/><rect x="1117.50" y="421.5" width="2.066" height="76.9"/><rect x="1119.57" y="421.0" width="2.066" height="82.4"/><rect x="1121.63" y="420.5" width="2.066" height="76.3"/><rect x="1123.70" y="421.0" width="2.066" height="78.3"/><rect x="1125.76" y="421.0" width="2.066" height="76.6"/><rect x="1127.83" y="421.5" width="2.066" height="77.8"/><rect x="1129.89" y="421.0" width="2.066" height="75.0"/><rect x="1131.96" y="467.6" width="2.066" height="45.0"/><rect x="1134.03" y="513.4" width="2.066" height="3.4"/><rect x="1136.09" y="512.6" width="2.066" height="4.2"/><rect x="1138.16" y="512.6" width="2.066" height="4.2"/><rect x="1140.22" y="493.4" width="2.066" height="18.4"/><rect x="1142.29" y="471.8" width="2.066" height="33.3"/><rect x="1144.35" y="466.8" width="2.066" height="37.5"/><rect x="1146.42" y="466.0" width="2.066" height="38.3"/><rect x="1148.48" y="462.6" width="2.066" height="41.7"/><rect x="1150.55" y="449.3" width="2.066" height="50.0"/><rect x="1152.62" y="513.4" width="2.066" height="3.4"/><rect x="1154.68" y="513.4" width="2.066" height="3.4"/><rect x="1156.75" y="512.6" width="2.066" height="4.2"/><rect x="1158.81" y="508.4" width="2.066" height="5.9"/><rect x="1160.88" y="504.3" width="2.066" height="8.3"/><rect x="1162.94" y="480.1" width="2.066" height="34.2"/></g>
<g fill="#c3b80a" stroke="#615c05" stroke-width="1"><rect x="532.97" y="500.0" width="2.066" height="19.0"/><rect x="535.03" y="508.0" width="2.066" height="11.0"/><rect x="537.10" y="344.3" width="2.066" height="143.0"/><rect x="539.16" y="439.3" width="2.066" height="59.1"/><rect x="541.23" y="431.0" width="2.066" height="70.8"/><rect x="543.29" y="402.3" width="2.066" height="80.3"/><rect x="545.36" y="422.3" width="2.066" height="65.0"/><rect x="547.42" y="486.8" width="2.066" height="24.2"/><rect x="549.49" y="471.3" width="2.066" height="38.0"/><rect x="551.55" y="146.3" width="2.066" height="296.4"/><rect x="553.62" y="216.9" width="2.066" height="256.6"/><rect x="555.69" y="216.3" width="2.066" height="258.0"/><rect x="557.75" y="262.0" width="2.066" height="202.3"/><rect x="559.82" y="238.3" width="2.066" height="207.7"/><rect x="561.88" y="184.6" width="2.066" height="279.7"/><rect x="563.95" y="222.9" width="2.066" height="245.6"/><rect x="566.01" y="228.3" width="2.066" height="260.1"/><rect x="568.08" y="237.8" width="2.066" height="224.8"/><rect x="570.14" y="44.7" width="2.066" height="378.3"/><rect x="572.21" y="45.5" width="2.066" height="377.5"/><rect x="574.28" y="93.8" width="2.066" height="335.5"/><rect x="576.34" y="202.0" width="2.066" height="237.3"/><rect x="578.41" y="136.3" width="2.066" height="289.7"/><rect x="580.47" y="192.5" width="2.066" height="246.0"/><rect x="582.54" y="127.0" width="2.066" height="295.3"/><rect x="584.60" y="115.4" width="2.066" height="306.0"/><rect x="586.67" y="132.0" width="2.066" height="290.0"/><rect x="588.73" y="119.0" width="2.066" height="303.0"/><rect x="590.80" y="115.4" width="2.066" height="305.2"/><rect x="592.87" y="118.8" width="2.066" height="303.2"/><rect x="594.93" y="116.3" width="2.066" height="305.7"/><rect x="597.00" y="110.4" width="2.066" height="310.6"/><rect x="599.06" y="120.8" width="2.066" height="301.2"/><rect x="601.13" y="115.8" width="2.066" height="306.2"/><rect x="603.19" y="115.4" width="2.066" height="305.6"/><rect x="605.26" y="119.3" width="2.066" height="302.7"/><rect x="607.32" y="115.4" width="2.066" height="305.6"/><rect x="609.39" y="115.4" width="2.066" height="306.6"/><rect x="611.45" y="111.3" width="2.066" height="309.7"/><rect x="613.52" y="119.6" width="2.066" height="302.4"/><rect x="615.59" y="108.8" width="2.066" height="312.2"/><rect x="617.65" y="121.3" width="2.066" height="300.7"/><rect x="619.72" y="119.3" width="2.066" height="301.7"/><rect x="621.78" y="117.1" width="2.066" height="304.9"/><rect x="623.85" y="115.4" width="2.066" height="305.6"/><rect x="625.91" y="112.4" width="2.066" height="309.6"/><rect x="627.98" y="117.6" width="2.066" height="303.4"/><rect x="630.04" y="110.4" width="2.066" height="311.6"/><rect x="632.11" y="119.9" width="2.066" height="301.1"/><rect x="634.17" y="117.9" width="2.066" height="304.1"/><rect x="636.24" y="207.4" width="2.066" height="236.1"/><rect x="638.31" y="119.3" width="2.066" height="302.7"/><rect x="640.37" y="108.8" width="2.066" height="312.2"/><rect x="642.44" y="121.3" width="2.066" height="300.7"/><rect x="644.50" y="119.3" width="2.066" height="301.7"/><rect x="646.57" y="117.1" width="2.066" height="304.9"/><rect x="648.63" y="114.9" width="2.066" height="306.1"/><rect x="650.70" y="112.6" width="2.066" height="309.4"/><rect x="652.76" y="117.1" width="2.066" height="303.9"/><rect x="654.83" y="110.4" width="2.066" height="310.6"/><rect x="656.90" y="270.3" width="2.066" height="227.3"/><rect x="658.96" y="345.7" width="2.066" height="143.6"/><rect x="661.03" y="309.0" width="2.066" height="172.0"/><rect x="663.09" y="115.9" width="2.066" height="313.4"/><rect x="665.16" y="132.6" width="2.066" height="310.1"/><rect x="667.22" y="225.8" width="2.066" height="255.2"/><rect x="669.29" y="159.1" width="2.066" height="270.9"/><rect x="671.35" y="110.4" width="2.066" height="296.0"/><rect x="673.42" y="91.3" width="2.066" height="309.7"/><rect x="675.49" y="90.5" width="2.066" height="310.5"/><rect x="677.55" y="245.0" width="2.066" height="234.3"/><rect x="679.62" y="213.0" width="2.066" height="248.8"/><rect x="681.68" y="194.6" width="2.066" height="256.0"/><rect x="683.75" y="189.1" width="2.066" height="261.5"/><rect x="685.81" y="186.6" width="2.066" height="264.0"/><rect x="687.88" y="191.3" width="2.066" height="259.3"/><rect x="689.94" y="186.3" width="2.066" height="264.3"/><rect x="692.01" y="200.3" width="2.066" height="250.7"/><rect x="694.07" y="140.3" width="2.066" height="314.8"/><rect x="696.14" y="217.4" width="2.066" height="249.4"/><rect x="698.21" y="71.8" width="2.066" height="365.0"/><rect x="700.27" y="148.0" width="2.066" height="298.0"/><rect x="702.34" y="160.0" width="2.066" height="307.6"/><rect x="704.40" y="97.6" width="2.066" height="306.4"/><rect x="706.47" y="90.5" width="2.066" height="310.5"/><rect x="708.53" y="91.3" width="2.066" height="309.7"/><rect x="710.60" y="193.3" width="2.066" height="279.3"/><rect x="712.66" y="219.6" width="2.066" height="231.4"/><rect x="714.73" y="188.0" width="2.066" height="262.1"/><rect x="716.79" y="191.3" width="2.066" height="258.8"/><rect x="718.86" y="186.3" width="2.066" height="263.8"/><rect x="720.93" y="189.1" width="2.066" height="261.0"/><rect x="722.99" y="237.0" width="2.066" height="215.6"/><rect x="725.06" y="193.6" width="2.066" height="268.2"/><rect x="727.12" y="175.0" width="2.066" height="281.0"/><rect x="729.19" y="163.3" width="2.066" height="284.3"/><rect x="731.25" y="106.0" width="2.066" height="319.0"/><rect x="733.32" y="58.8" width="2.066" height="366.2"/><rect x="735.38" y="205.0" width="2.066" height="273.5"/><rect x="737.45" y="114.6" width="2.066" height="298.4"/><rect x="739.52" y="99.6" width="2.066" height="304.4"/><rect x="741.58" y="100.0" width="2.066" height="304.0"/><rect x="743.65" y="109.3" width="2.066" height="296.7"/><rect x="745.71" y="256.1" width="2.066" height="229.0"/><rect x="747.78" y="204.6" width="2.066" height="254.7"/><rect x="749.84" y="190.3" width="2.066" height="260.7"/><rect x="751.91" y="187.5" width="2.066" height="263.5"/><rect x="753.97" y="191.3" width="2.066" height="259.7"/><rect x="756.04" y="188.0" width="2.066" height="263.0"/><rect x="758.11" y="188.0" width="2.066" height="262.1"/><rect x="760.17" y="215.3" width="2.066" height="244.0"/><rect x="762.24" y="54.7" width="2.066" height="385.5"/><rect x="764.30" y="366.5" width="2.066" height="132.8"/><rect x="766.37" y="360.3" width="2.066" height="137.3"/><rect x="768.43" y="364.0" width="2.066" height="138.6"/><rect x="770.50" y="330.3" width="2.066" height="166.5"/><rect x="772.56" y="346.5" width="2.066" height="151.9"/><rect x="774.63" y="322.8" width="2.066" height="174.8"/><rect x="776.69" y="368.6" width="2.066" height="131.5"/><rect x="778.76" y="376.0" width="2.066" height="125.8"/><rect x="780.83" y="368.6" width="2.066" height="133.2"/><rect x="782.89" y="290.0" width="2.066" height="201.8"/><rect x="784.96" y="260.3" width="2.066" height="228.1"/><rect x="787.02" y="237.3" width="2.066" height="247.8"/><rect x="789.09" y="247.8" width="2.066" height="239.8"/><rect x="791.15" y="196.3" width="2.066" height="285.5"/><rect x="793.22" y="285.3" width="2.066" height="199.8"/><rect x="795.28" y="345.7" width="2.066" height="148.6"/><rect x="797.35" y="358.1" width="2.066" height="142.0"/><rect x="799.41" y="316.1" width="2.066" height="174.9"/><rect x="801.48" y="343.2" width="2.066" height="152.8"/><rect x="803.55" y="303.3" width="2.066" height="187.7"/><rect x="805.61" y="361.5" width="2.066" height="135.3"/><rect x="807.68" y="361.2" width="2.066" height="135.6"/><rect x="809.74" y="341.3" width="2.066" height="151.3"/><rect x="811.81" y="293.3" width="2.066" height="194.3"/><rect x="813.87" y="207.4" width="2.066" height="270.2"/><rect x="815.94" y="203.3" width="2.066" height="275.2"/><rect x="818.00" y="252.0" width="2.066" height="240.6"/><rect x="820.07" y="175.8" width="2.066" height="298.5"/><rect x="822.14" y="310.6" width="2.066" height="182.8"/><rect x="824.20" y="381.6" width="2.066" height="132.7"/><rect x="826.27" y="399.2" width="2.066" height="115.9"/><rect x="828.33" y="381.5" width="2.066" height="132.8"/><rect x="830.40" y="348.0" width="2.066" height="153.0"/><rect x="832.46" y="236.2" width="2.066" height="248.9"/><rect x="834.53" y="226.9" width="2.066" height="257.4"/><rect x="836.59" y="224.1" width="2.066" height="259.4"/><rect x="838.66" y="230.3" width="2.066" height="251.5"/><rect x="840.73" y="197.4" width="2.066" height="283.6"/><rect x="842.79" y="200.3" width="2.066" height="283.2"/><rect x="844.86" y="229.9" width="2.066" height="253.6"/><rect x="846.92" y="213.3" width="2.066" height="268.5"/><rect x="848.99" y="183.3" width="2.066" height="296.3"/><rect x="851.05" y="221.3" width="2.066" height="258.8"/><rect x="853.12" y="215.3" width="2.066" height="262.3"/><rect x="855.18" y="158.3" width="2.066" height="311.8"/><rect x="857.25" y="184.6" width="2.066" height="289.7"/><rect x="859.31" y="192.5" width="2.066" height="283.5"/><rect x="861.38" y="153.0" width="2.066" height="316.0"/><rect x="863.45" y="168.3" width="2.066" height="303.5"/><rect x="865.51" y="183.3" width="2.066" height="292.7"/><rect x="867.58" y="146.7" width="2.066" height="323.4"/><rect x="869.64" y="320.3" width="2.066" height="179.0"/><rect x="871.71" y="399.2" width="2.066" height="115.1"/><rect x="873.77" y="381.5" width="2.066" height="132.8"/><rect x="875.84" y="381.5" width="2.066" height="132.8"/><rect x="877.90" y="344.3" width="2.066" height="155.0"/><rect x="879.97" y="228.6" width="2.066" height="257.4"/><rect x="882.03" y="207.8" width="2.066" height="274.0"/><rect x="884.10" y="219.1" width="2.066" height="262.7"/><rect x="886.17" y="220.8" width="2.066" height="261.8"/><rect x="888.23" y="225.8" width="2.066" height="259.3"/><rect x="890.30" y="205.3" width="2.066" height="277.3"/><rect x="892.36" y="244.0" width="2.066" height="242.0"/><rect x="894.43" y="224.3" width="2.066" height="260.8"/><rect x="896.49" y="217.7" width="2.066" height="264.9"/><rect x="898.56" y="257.8" width="2.066" height="222.3"/><rect x="900.62" y="205.3" width="2.066" height="271.5"/><rect x="902.69" y="165.3" width="2.066" height="305.7"/><rect x="904.76" y="163.6" width="2.066" height="305.7"/><rect x="906.82" y="187.0" width="2.066" height="287.3"/><rect x="908.89" y="155.3" width="2.066" height="315.7"/><rect x="910.95" y="174.1" width="2.066" height="297.7"/><rect x="913.02" y="160.3" width="2.066" height="310.7"/><rect x="915.08" y="168.0" width="2.066" height="305.5"/><rect x="917.15" y="257.0" width="2.066" height="227.3"/><rect x="919.21" y="397.7" width="2.066" height="117.4"/><rect x="921.28" y="381.4" width="2.066" height="133.7"/><rect x="923.35" y="381.4" width="2.066" height="132.9"/><rect x="925.41" y="384.4" width="2.066" height="129.0"/><rect x="927.48" y="345.3" width="2.066" height="152.3"/><rect x="929.54" y="155.3" width="2.066" height="275.7"/><rect x="931.61" y="77.1" width="2.066" height="367.2"/><rect x="933.67" y="199.1" width="2.066" height="270.2"/><rect x="935.74" y="128.8" width="2.066" height="294.2"/><rect x="937.80" y="107.1" width="2.066" height="298.9"/><rect x="939.87" y="83.0" width="2.066" height="316.0"/><rect x="941.93" y="83.7" width="2.066" height="315.3"/><rect x="944.00" y="206.6" width="2.066" height="275.4"/><rect x="946.07" y="206.1" width="2.066" height="256.1"/><rect x="948.13" y="191.7" width="2.066" height="258.9"/><rect x="950.20" y="188.3" width="2.066" height="262.3"/><rect x="952.26" y="189.6" width="2.066" height="261.0"/><rect x="954.33" y="190.0" width="2.066" height="260.6"/><rect x="956.39" y="188.3" width="2.066" height="262.3"/><rect x="958.46" y="208.3" width="2.066" height="246.4"/><rect x="960.52" y="124.6" width="2.066" height="339.0"/><rect x="962.59" y="271.1" width="2.066" height="215.0"/><rect x="964.65" y="234.0" width="2.066" height="248.6"/><rect x="966.72" y="211.3" width="2.066" height="273.0"/><rect x="968.79" y="230.8" width="2.066" height="252.7"/><rect x="970.85" y="229.6" width="2.066" height="253.0"/><rect x="972.92" y="205.3" width="2.066" height="278.2"/><rect x="974.98" y="208.0" width="2.066" height="276.3"/><rect x="977.05" y="237.0" width="2.066" height="245.6"/><rect x="979.11" y="204.1" width="2.066" height="276.9"/><rect x="981.18" y="170.0" width="2.066" height="308.5"/><rect x="983.24" y="227.4" width="2.066" height="251.9"/><rect x="985.31" y="255.3" width="2.066" height="228.2"/><rect x="987.38" y="175.0" width="2.066" height="296.8"/><rect x="989.44" y="199.1" width="2.066" height="276.0"/><rect x="991.51" y="184.6" width="2.066" height="291.4"/><rect x="993.57" y="150.8" width="2.066" height="319.3"/><rect x="995.64" y="169.1" width="2.066" height="301.9"/><rect x="997.70" y="173.0" width="2.066" height="300.5"/><rect x="999.77" y="167.5" width="2.066" height="306.0"/><rect x="1001.83" y="283.3" width="2.066" height="208.5"/><rect x="1003.90" y="398.9" width="2.066" height="115.4"/><rect x="1005.97" y="382.0" width="2.066" height="133.1"/><rect x="1008.03" y="398.1" width="2.066" height="117.0"/><rect x="1010.10" y="363.6" width="2.066" height="147.4"/><rect x="1012.16" y="327.3" width="2.066" height="161.1"/><rect x="1014.23" y="272.5" width="2.066" height="204.3"/><rect x="1016.29" y="317.3" width="2.066" height="167.0"/><rect x="1018.36" y="285.0" width="2.066" height="191.0"/><rect x="1020.42" y="263.1" width="2.066" height="212.0"/><rect x="1022.49" y="223.3" width="2.066" height="233.5"/><rect x="1024.55" y="341.0" width="2.066" height="150.8"/><rect x="1026.62" y="393.1" width="2.066" height="120.3"/><rect x="1028.69" y="376.0" width="2.066" height="135.0"/><rect x="1030.75" y="366.5" width="2.066" height="142.8"/><rect x="1032.82" y="251.7" width="2.066" height="225.9"/><rect x="1034.88" y="273.3" width="2.066" height="201.8"/><rect x="1036.95" y="266.1" width="2.066" height="205.7"/><rect x="1039.01" y="275.0" width="2.066" height="195.6"/><rect x="1041.08" y="237.0" width="2.066" height="224.0"/><rect x="1043.14" y="205.3" width="2.066" height="245.7"/><rect x="1045.21" y="356.5" width="2.066" height="142.8"/><rect x="1047.28" y="393.1" width="2.066" height="120.3"/><rect x="1049.34" y="377.0" width="2.066" height="136.4"/><rect x="1051.41" y="392.3" width="2.066" height="121.1"/><rect x="1053.47" y="240.0" width="2.066" height="221.8"/><rect x="1055.54" y="176.3" width="2.066" height="260.5"/><rect x="1057.60" y="109.6" width="2.066" height="310.2"/><rect x="1059.67" y="105.4" width="2.066" height="315.6"/><rect x="1061.73" y="143.3" width="2.066" height="284.4"/><rect x="1063.80" y="113.3" width="2.066" height="307.3"/><rect x="1065.86" y="111.3" width="2.066" height="309.3"/><rect x="1067.93" y="119.9" width="2.066" height="301.1"/><rect x="1070.00" y="110.4" width="2.066" height="311.1"/><rect x="1072.06" y="167.0" width="2.066" height="266.5"/><rect x="1074.13" y="116.3" width="2.066" height="304.7"/><rect x="1076.19" y="108.3" width="2.066" height="312.2"/><rect x="1078.26" y="104.3" width="2.066" height="316.7"/><rect x="1080.32" y="112.4" width="2.066" height="308.1"/><rect x="1082.39" y="122.1" width="2.066" height="299.4"/><rect x="1084.45" y="103.3" width="2.066" height="317.7"/><rect x="1086.52" y="114.6" width="2.066" height="305.9"/><rect x="1088.59" y="117.6" width="2.066" height="303.4"/><rect x="1090.65" y="106.3" width="2.066" height="314.2"/><rect x="1092.72" y="105.4" width="2.066" height="316.1"/><rect x="1094.78" y="112.6" width="2.066" height="308.4"/><rect x="1096.85" y="112.1" width="2.066" height="308.4"/><rect x="1098.91" y="108.3" width="2.066" height="312.7"/><rect x="1100.98" y="109.6" width="2.066" height="311.9"/><rect x="1103.04" y="111.3" width="2.066" height="309.7"/><rect x="1105.11" y="114.6" width="2.066" height="305.9"/><rect x="1107.17" y="112.4" width="2.066" height="308.6"/><rect x="1109.24" y="113.3" width="2.066" height="308.2"/><rect x="1111.31" y="107.1" width="2.066" height="313.9"/><rect x="1113.37" y="110.4" width="2.066" height="310.1"/><rect x="1115.44" y="108.0" width="2.066" height="313.0"/><rect x="1117.50" y="111.3" width="2.066" height="310.2"/><rect x="1119.57" y="110.4" width="2.066" height="310.6"/><rect x="1121.63" y="110.4" width="2.066" height="310.1"/><rect x="1123.70" y="112.6" width="2.066" height="308.4"/><rect x="1125.76" y="103.3" width="2.066" height="317.7"/><rect x="1127.83" y="114.3" width="2.066" height="307.2"/><rect x="1129.89" y="111.3" width="2.066" height="309.7"/><rect x="1131.96" y="285.6" width="2.066" height="182.0"/><rect x="1134.03" y="393.1" width="2.066" height="120.3"/><rect x="1136.09" y="375.6" width="2.066" height="137.0"/><rect x="1138.16" y="375.6" width="2.066" height="137.0"/><rect x="1140.22" y="334.3" width="2.066" height="159.1"/><rect x="1142.29" y="218.3" width="2.066" height="253.5"/><rect x="1144.35" y="204.6" width="2.066" height="262.2"/><rect x="1146.42" y="233.7" width="2.066" height="232.3"/><rect x="1148.48" y="218.3" width="2.066" height="244.3"/><rect x="1150.55" y="213.0" width="2.066" height="236.3"/><rect x="1152.62" y="393.1" width="2.066" height="120.3"/><rect x="1154.68" y="393.1" width="2.066" height="120.3"/><rect x="1156.75" y="376.0" width="2.066" height="136.6"/><rect x="1158.81" y="374.0" width="2.066" height="134.4"/><rect x="1160.88" y="377.3" width="2.066" height="127.0"/><rect x="1162.94" y="297.3" width="2.066" height="182.8"/></g>
</g>
<g clip-path="url(#fc)">
<rect x="496" y="9" width="37" height="511" fill="#c2c2c2"/><rect x="496" y="9" width="1" height="511" fill="#e6e6e6"/>
<rect x="531" y="520" width="673" height="34" fill="#c2c2c2"/>
<rect x="496" y="520" width="35" height="34" fill="#fff"/>
<g stroke="#000" stroke-width="1"><line x1="520" y1="519.70" x2="533" y2="519.70"/><line x1="526" y1="512.25" x2="533" y2="512.25"/><line x1="526" y1="504.80" x2="533" y2="504.80"/><line x1="526" y1="497.35" x2="533" y2="497.35"/><line x1="526" y1="489.90" x2="533" y2="489.90"/><line x1="526" y1="482.45" x2="533" y2="482.45"/><line x1="526" y1="475.00" x2="533" y2="475.00"/><line x1="526" y1="467.54" x2="533" y2="467.54"/><line x1="526" y1="460.09" x2="533" y2="460.09"/><line x1="526" y1="452.64" x2="533" y2="452.64"/><line x1="520" y1="445.19" x2="533" y2="445.19"/><line x1="526" y1="437.74" x2="533" y2="437.74"/><line x1="526" y1="430.29" x2="533" y2="430.29"/><line x1="526" y1="422.84" x2="533" y2="422.84"/><line x1="526" y1="415.39" x2="533" y2="415.39"/><line x1="526" y1="407.94" x2="533" y2="407.94"/><line x1="526" y1="400.49" x2="533" y2="400.49"/><line x1="526" y1="393.04" x2="533" y2="393.04"/><line x1="526" y1="385.59" x2="533" y2="385.59"/><line x1="526" y1="378.13" x2="533" y2="378.13"/><line x1="520" y1="370.68" x2="533" y2="370.68"/><line x1="526" y1="363.23" x2="533" y2="363.23"/><line x1="526" y1="355.78" x2="533" y2="355.78"/><line x1="526" y1="348.33" x2="533" y2="348.33"/><line x1="526" y1="340.88" x2="533" y2="340.88"/><line x1="526" y1="333.43" x2="533" y2="333.43"/><line x1="526" y1="325.98" x2="533" y2="325.98"/><line x1="526" y1="318.53" x2="533" y2="318.53"/><line x1="526" y1="311.08" x2="533" y2="311.08"/><line x1="526" y1="303.63" x2="533" y2="303.63"/><line x1="520" y1="296.18" x2="533" y2="296.18"/><line x1="526" y1="288.73" x2="533" y2="288.73"/><line x1="526" y1="281.27" x2="533" y2="281.27"/><line x1="526" y1="273.82" x2="533" y2="273.82"/><line x1="526" y1="266.37" x2="533" y2="266.37"/><line x1="526" y1="258.92" x2="533" y2="258.92"/><line x1="526" y1="251.47" x2="533" y2="251.47"/><line x1="526" y1="244.02" x2="533" y2="244.02"/><line x1="526" y1="236.57" x2="533" y2="236.57"/><line x1="526" y1="229.12" x2="533" y2="229.12"/><line x1="520" y1="221.67" x2="533" y2="221.67"/><line x1="526" y1="214.22" x2="533" y2="214.22"/><line x1="526" y1="206.77" x2="533" y2="206.77"/><line x1="526" y1="199.32" x2="533" y2="199.32"/><line x1="526" y1="191.86" x2="533" y2="191.86"/><line x1="526" y1="184.41" x2="533" y2="184.41"/><line x1="526" y1="176.96" x2="533" y2="176.96"/><line x1="526" y1="169.51" x2="533" y2="169.51"/><line x1="526" y1="162.06" x2="533" y2="162.06"/><line x1="526" y1="154.61" x2="533" y2="154.61"/><line x1="520" y1="147.16" x2="533" y2="147.16"/><line x1="526" y1="139.71" x2="533" y2="139.71"/><line x1="526" y1="132.26" x2="533" y2="132.26"/><line x1="526" y1="124.81" x2="533" y2="124.81"/><line x1="526" y1="117.36" x2="533" y2="117.36"/><line x1="526" y1="109.91" x2="533" y2="109.91"/><line x1="526" y1="102.46" x2="533" y2="102.46"/><line x1="526" y1="95.00" x2="533" y2="95.00"/><line x1="526" y1="87.55" x2="533" y2="87.55"/><line x1="526" y1="80.10" x2="533" y2="80.10"/><line x1="520" y1="72.65" x2="533" y2="72.65"/><line x1="526" y1="65.20" x2="533" y2="65.20"/><line x1="526" y1="57.75" x2="533" y2="57.75"/><line x1="526" y1="50.30" x2="533" y2="50.30"/><line x1="526" y1="42.85" x2="533" y2="42.85"/><line x1="526" y1="35.40" x2="533" y2="35.40"/><line x1="526" y1="27.95" x2="533" y2="27.95"/><line x1="526" y1="20.50" x2="533" y2="20.50"/><line x1="526" y1="13.05" x2="533" y2="13.05"/><line x1="541.62" y1="519.5" x2="541.62" y2="529"/><line x1="551.94" y1="519.5" x2="551.94" y2="529"/><line x1="562.25" y1="519.5" x2="562.25" y2="529"/><line x1="572.57" y1="519.5" x2="572.57" y2="529"/><line x1="582.89" y1="519.5" x2="582.89" y2="529"/><line x1="593.21" y1="519.5" x2="593.21" y2="529"/><line x1="603.53" y1="519.5" x2="603.53" y2="529"/><line x1="613.84" y1="519.5" x2="613.84" y2="529"/><line x1="624.16" y1="519.5" x2="624.16" y2="529"/><line x1="634.48" y1="519.5" x2="634.48" y2="538"/><line x1="644.80" y1="519.5" x2="644.80" y2="529"/><line x1="655.12" y1="519.5" x2="655.12" y2="529"/><line x1="665.43" y1="519.5" x2="665.43" y2="529"/><line x1="675.75" y1="519.5" x2="675.75" y2="529"/><line x1="686.07" y1="519.5" x2="686.07" y2="529"/><line x1="696.39" y1="519.5" x2="696.39" y2="529"/><line x1="706.71" y1="519.5" x2="706.71" y2="529"/><line x1="717.02" y1="519.5" x2="717.02" y2="529"/><line x1="727.34" y1="519.5" x2="727.34" y2="529"/><line x1="737.66" y1="519.5" x2="737.66" y2="538"/><line x1="747.98" y1="519.5" x2="747.98" y2="529"/><line x1="758.30" y1="519.5" x2="758.30" y2="529"/><line x1="768.61" y1="519.5" x2="768.61" y2="529"/><line x1="778.93" y1="519.5" x2="778.93" y2="529"/><line x1="789.25" y1="519.5" x2="789.25" y2="529"/><line x1="799.57" y1="519.5" x2="799.57" y2="529"/><line x1="809.89" y1="519.5" x2="809.89" y2="529"/><line x1="820.20" y1="519.5" x2="820.20" y2="529"/><line x1="830.52" y1="519.5" x2="830.52" y2="529"/><line x1="840.84" y1="519.5" x2="840.84" y2="538"/><line x1="851.16" y1="519.5" x2="851.16" y2="529"/><line x1="861.48" y1="519.5" x2="861.48" y2="529"/><line x1="871.79" y1="519.5" x2="871.79" y2="529"/><line x1="882.11" y1="519.5" x2="882.11" y2="529"/><line x1="892.43" y1="519.5" x2="892.43" y2="529"/><line x1="902.75" y1="519.5" x2="902.75" y2="529"/><line x1="913.07" y1="519.5" x2="913.07" y2="529"/><line x1="923.38" y1="519.5" x2="923.38" y2="529"/><line x1="933.70" y1="519.5" x2="933.70" y2="529"/><line x1="944.02" y1="519.5" x2="944.02" y2="538"/><line x1="954.34" y1="519.5" x2="954.34" y2="529"/><line x1="964.66" y1="519.5" x2="964.66" y2="529"/><line x1="974.97" y1="519.5" x2="974.97" y2="529"/><line x1="985.29" y1="519.5" x2="985.29" y2="529"/><line x1="995.61" y1="519.5" x2="995.61" y2="529"/><line x1="1005.93" y1="519.5" x2="1005.93" y2="529"/><line x1="1016.25" y1="519.5" x2="1016.25" y2="529"/><line x1="1026.56" y1="519.5" x2="1026.56" y2="529"/><line x1="1036.88" y1="519.5" x2="1036.88" y2="529"/><line x1="1047.20" y1="519.5" x2="1047.20" y2="538"/><line x1="1057.52" y1="519.5" x2="1057.52" y2="529"/><line x1="1067.84" y1="519.5" x2="1067.84" y2="529"/><line x1="1078.15" y1="519.5" x2="1078.15" y2="529"/><line x1="1088.47" y1="519.5" x2="1088.47" y2="529"/><line x1="1098.79" y1="519.5" x2="1098.79" y2="529"/><line x1="1109.11" y1="519.5" x2="1109.11" y2="529"/><line x1="1119.43" y1="519.5" x2="1119.43" y2="529"/><line x1="1129.74" y1="519.5" x2="1129.74" y2="529"/><line x1="1140.06" y1="519.5" x2="1140.06" y2="529"/><line x1="1150.38" y1="519.5" x2="1150.38" y2="538"/><line x1="1160.70" y1="519.5" x2="1160.70" y2="529"/><line x1="1171.02" y1="519.5" x2="1171.02" y2="529"/><line x1="1181.33" y1="519.5" x2="1181.33" y2="529"/><line x1="1191.65" y1="519.5" x2="1191.65" y2="529"/><line x1="1201.97" y1="519.5" x2="1201.97" y2="529"/></g>
<g font-family="Liberation Sans, sans-serif" font-size="13.5" fill="#000"><text transform="translate(514.3,519.70) rotate(-90)" text-anchor="middle" textLength="8.5" lengthAdjust="spacingAndGlyphs" fill="#000" font-size="14">0</text><text transform="translate(514.3,445.19) rotate(-90)" text-anchor="middle" textLength="25.4" lengthAdjust="spacingAndGlyphs" fill="#000" font-size="14">300</text><text transform="translate(514.3,370.68) rotate(-90)" text-anchor="middle" textLength="25.4" lengthAdjust="spacingAndGlyphs" fill="#000" font-size="14">600</text><text transform="translate(514.3,296.18) rotate(-90)" text-anchor="middle" textLength="25.4" lengthAdjust="spacingAndGlyphs" fill="#000" font-size="14">900</text><text transform="translate(514.3,221.67) rotate(-90)" text-anchor="middle" textLength="33.9" lengthAdjust="spacingAndGlyphs" fill="#000" font-size="14">1200</text><text transform="translate(514.3,147.16) rotate(-90)" text-anchor="middle" textLength="33.9" lengthAdjust="spacingAndGlyphs" fill="#000" font-size="14">1500</text><text transform="translate(514.3,72.65) rotate(-90)" text-anchor="middle" textLength="33.9" lengthAdjust="spacingAndGlyphs" fill="#000" font-size="14">1800</text><text transform="translate(514.3,-1.86) rotate(-90)" text-anchor="middle" textLength="33.9" lengthAdjust="spacingAndGlyphs" fill="#000" font-size="14">2100</text><text x="634.48" y="552.6" text-anchor="middle" textLength="46.6" lengthAdjust="spacingAndGlyphs" fill="#000" font-size="14">50,000</text><text x="737.66" y="552.6" text-anchor="middle" textLength="55.1" lengthAdjust="spacingAndGlyphs" fill="#000" font-size="14">100,000</text><text x="840.84" y="552.6" text-anchor="middle" textLength="55.1" lengthAdjust="spacingAndGlyphs" fill="#000" font-size="14">150,000</text><text x="944.02" y="552.6" text-anchor="middle" textLength="55.1" lengthAdjust="spacingAndGlyphs" fill="#000" font-size="14">200,000</text><text x="1047.20" y="552.6" text-anchor="middle" textLength="55.1" lengthAdjust="spacingAndGlyphs" fill="#000" font-size="14">250,000</text><text x="1150.38" y="552.6" text-anchor="middle" textLength="55.1" lengthAdjust="spacingAndGlyphs" fill="#000" font-size="14">300,000</text></g>
</g>
</svg>
<!-- chart frame light band -->
<div style="left:495px;top:555px;width:713px;height:3px;background:#f3f2f1"></div>
<!-- v scrollbar -->
<div class="sb" style="left:1208px;top:8px;width:15px;height:15px;border-radius:3px 3px 0 0;"></div>
<svg class="arr" style="left:1211px;top:12px" width="9" height="7" viewBox="0 0 9 7"><path d="M1 5.5 L4.5 2 L8 5.5" fill="none" stroke="#a19d99" stroke-width="1.2"/></svg>
<div class="vh" style="left:1208px;top:23px;width:15px;height:520px;"></div>
<div class="grip" style="left:1213px;top:279px;width:5px;height:1px"></div><div class="grip" style="left:1213px;top:282px;width:5px;height:1px"></div><div class="grip" style="left:1213px;top:285px;width:5px;height:1px"></div>
<div class="sb" style="left:1208px;top:543px;width:15px;height:15px;border-radius:0 0 3px 3px;"></div>
<svg class="arr" style="left:1211px;top:547px" width="9" height="7" viewBox="0 0 9 7"><path d="M1 1.5 L4.5 5 L8 1.5" fill="none" stroke="#a19d99" stroke-width="1.2"/></svg>
<!-- chart h scrollbar -->
<div class="sb" style="left:495px;top:558px;width:15px;height:15px;border-radius:3px 0 0 3px;"></div>
<svg class="arr" style="left:499px;top:561px" width="8" height="9" viewBox="0 0 8 9"><path d="M5 1 L2 4.5 L5 8" fill="none" stroke="#a19d99" stroke-width="1.2"/></svg>
<div class="hh" style="left:510px;top:558px;width:683px;height:15px;"></div>
<div class="grip" style="left:847px;top:563px;width:1px;height:5px"></div><div class="grip" style="left:850px;top:563px;width:1px;height:5px"></div><div class="grip" style="left:853px;top:563px;width:1px;height:5px"></div>
<div class="sb" style="left:1193px;top:558px;width:15px;height:15px;border-radius:0 3px 3px 0;"></div>
<svg class="arr" style="left:1197px;top:561px" width="8" height="9" viewBox="0 0 8 9"><path d="M3 1 L6 4.5 L3 8" fill="none" stroke="#a19d99" stroke-width="1.2"/></svg>
<svg style="left:0;top:0;will-change:transform" width="1231" height="583" viewBox="0 0 1231 583" font-family="Liberation Sans, sans-serif"><text x="55.5" y="49" text-anchor="start" textLength="147.2" lengthAdjust="spacingAndGlyphs" fill="#000" font-size="14">0x00_SW_INCREMENT</text><text x="338" y="49" text-anchor="start" textLength="4.8" lengthAdjust="spacingAndGlyphs" fill="#000" font-size="14">-</text><text x="373" y="49" text-anchor="start" textLength="4.8" lengthAdjust="spacingAndGlyphs" fill="#000" font-size="14">-</text><text x="411.5" y="49" text-anchor="start" textLength="4.8" lengthAdjust="spacingAndGlyphs" fill="#000" font-size="14">-</text><text x="55.5" y="69" text-anchor="start" textLength="275.5" lengthAdjust="spacingAndGlyphs" fill="#000" font-size="14">0x08_INST_ARCHITECTURALLY_EXECUTED</text><text x="338" y="69" text-anchor="start" textLength="17.0" lengthAdjust="spacingAndGlyphs" fill="#000" font-size="14">29</text><text x="373" y="69" text-anchor="start" textLength="29.7" lengthAdjust="spacingAndGlyphs" fill="#000" font-size="14">15...</text><text x="411.5" y="69" text-anchor="start" textLength="55.1" lengthAdjust="spacingAndGlyphs" fill="#000" font-size="14">303,930</text><text x="55.5" y="89" text-anchor="start" textLength="115.9" lengthAdjust="spacingAndGlyphs" fill="#fff" font-size="14">0x09_EXC_TAKEN</text><text x="338" y="89" text-anchor="start" textLength="8.5" lengthAdjust="spacingAndGlyphs" fill="#fff" font-size="14">1</text><text x="373" y="89" text-anchor="start" textLength="8.5" lengthAdjust="spacingAndGlyphs" fill="#fff" font-size="14">1</text><text x="411.5" y="89" text-anchor="start" textLength="8.5" lengthAdjust="spacingAndGlyphs" fill="#fff" font-size="14">7</text><text x="55.5" y="109" text-anchor="start" textLength="128.0" lengthAdjust="spacingAndGlyphs" fill="#000" font-size="14">0x0A_EXC_RETURN</text><text x="338" y="109" text-anchor="start" textLength="8.5" lengthAdjust="spacingAndGlyphs" fill="#000" font-size="14">1</text><text x="373" y="109" text-anchor="start" textLength="8.5" lengthAdjust="spacingAndGlyphs" fill="#000" font-size="14">1</text><text x="411.5" y="109" text-anchor="start" textLength="8.5" lengthAdjust="spacingAndGlyphs" fill="#000" font-size="14">7</text><text x="55.5" y="129" text-anchor="start" textLength="113.7" lengthAdjust="spacingAndGlyphs" fill="#000" font-size="14">0x0B_CID_WRITE</text><text x="338" y="129" text-anchor="start" textLength="4.8" lengthAdjust="spacingAndGlyphs" fill="#000" font-size="14">-</text><text x="373" y="129" text-anchor="start" textLength="4.8" lengthAdjust="spacingAndGlyphs" fill="#000" font-size="14">-</text><text x="411.5" y="129" text-anchor="start" textLength="4.8" lengthAdjust="spacingAndGlyphs" fill="#000" font-size="14">-</text><text x="55.5" y="149" text-anchor="start" textLength="118.0" lengthAdjust="spacingAndGlyphs" fill="#000" font-size="14">0x06_DATA_READ</text><text x="338" y="149" text-anchor="start" textLength="8.5" lengthAdjust="spacingAndGlyphs" fill="#000" font-size="14">3</text><text x="373" y="149" text-anchor="start" textLength="25.4" lengthAdjust="spacingAndGlyphs" fill="#000" font-size="14">441</text><text x="411.5" y="149" text-anchor="start" textLength="46.6" lengthAdjust="spacingAndGlyphs" fill="#000" font-size="14">55,571</text><text x="55.5" y="169" text-anchor="start" textLength="123.9" lengthAdjust="spacingAndGlyphs" fill="#000" font-size="14">0x07_DATA_WRITE</text><text x="338" y="169" text-anchor="start" textLength="8.5" lengthAdjust="spacingAndGlyphs" fill="#000" font-size="14">1</text><text x="373" y="169" text-anchor="start" textLength="25.4" lengthAdjust="spacingAndGlyphs" fill="#000" font-size="14">194</text><text x="411.5" y="169" text-anchor="start" textLength="46.6" lengthAdjust="spacingAndGlyphs" fill="#000" font-size="14">15,707</text><text x="10.5" y="26" text-anchor="start" textLength="31.8" lengthAdjust="spacingAndGlyphs" fill="#000" font-size="14">Item</text><text x="338" y="26" text-anchor="start" textLength="25.1" lengthAdjust="spacingAndGlyphs" fill="#000" font-size="14">Min</text><text x="373.5" y="26" text-anchor="start" textLength="27.5" lengthAdjust="spacingAndGlyphs" fill="#000" font-size="14">Max</text><text x="411.5" y="26" text-anchor="start" textLength="33.6" lengthAdjust="spacingAndGlyphs" fill="#000" font-size="14">Total</text><text x="28.5" y="563" text-anchor="start" textLength="78.0" lengthAdjust="spacingAndGlyphs" fill="#000" font-size="14">Uncheck All</text><text x="427.5" y="564" text-anchor="start" textLength="37.6" lengthAdjust="spacingAndGlyphs" fill="#000" font-size="14">Apply</text></svg>
</body></html>
